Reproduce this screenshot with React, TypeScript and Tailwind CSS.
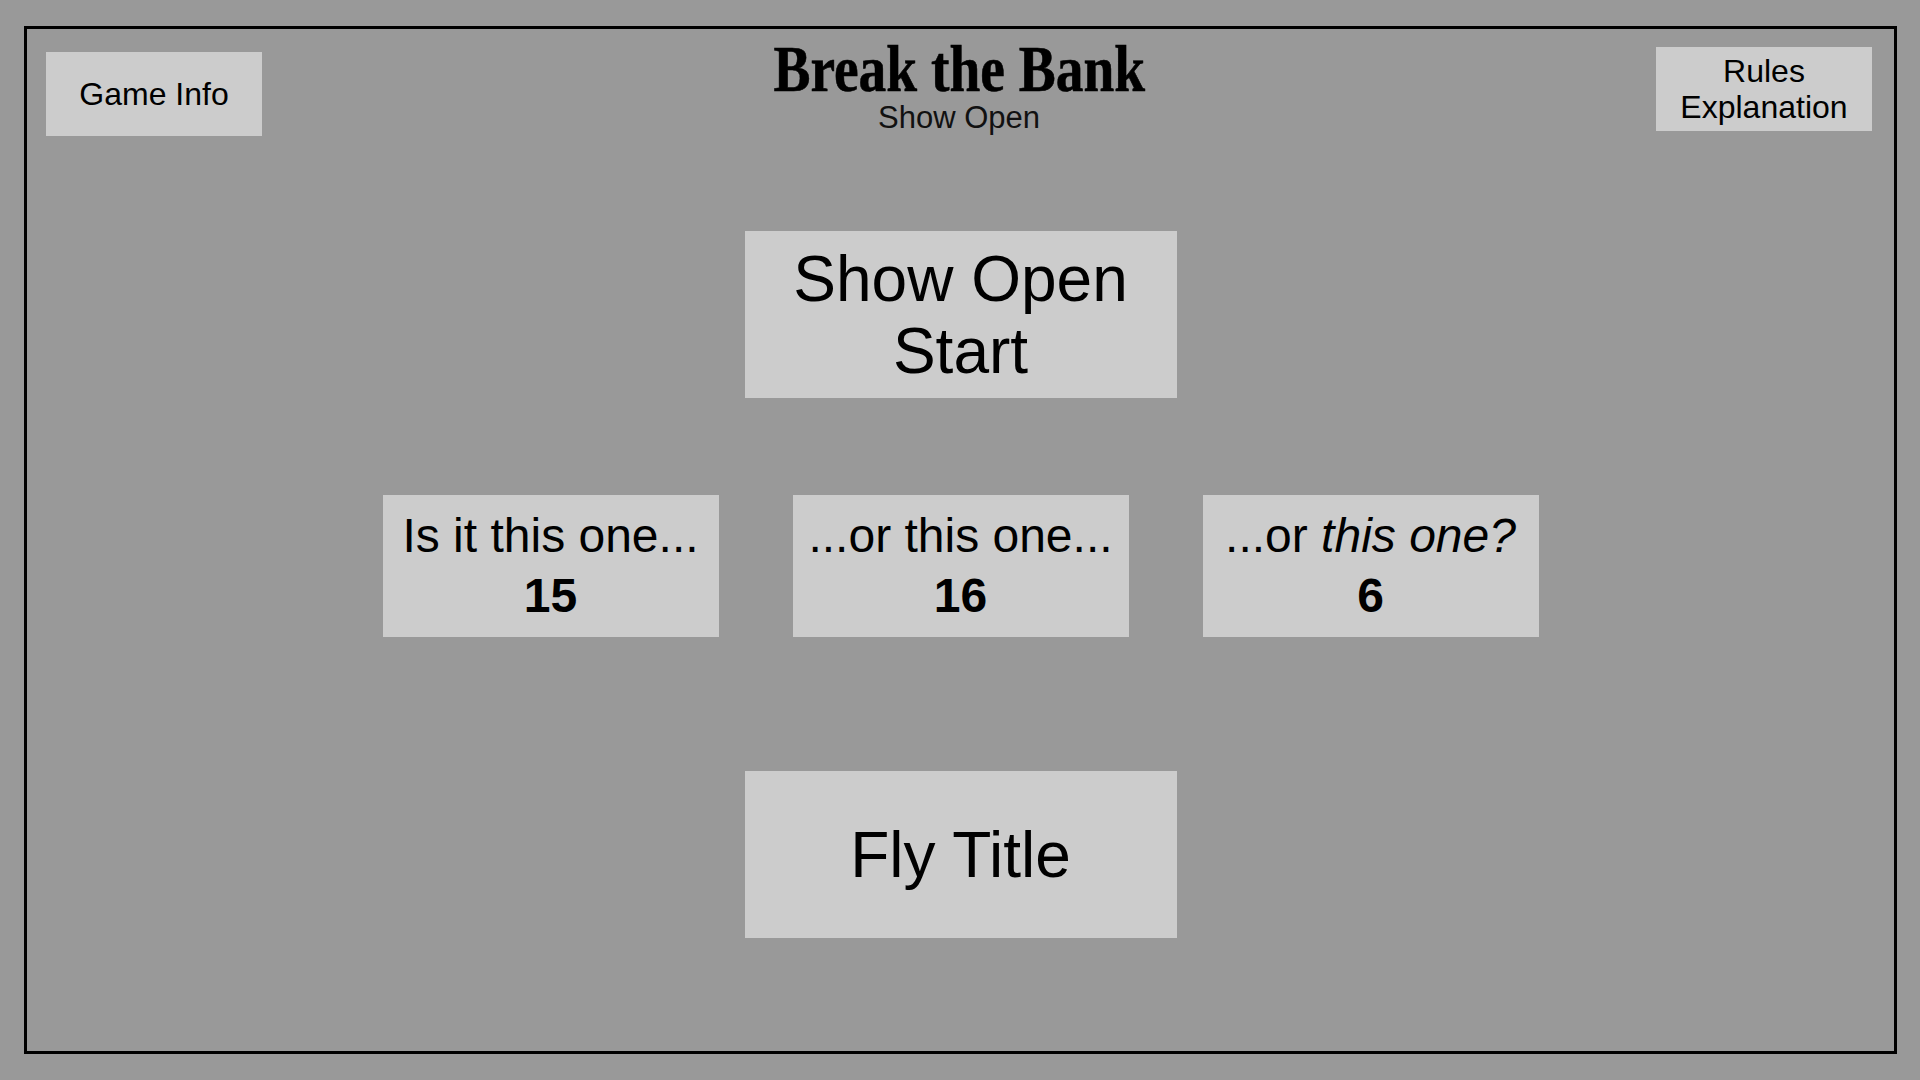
const sans = 'font-["Liberation_Sans",Arial,sans-serif]';

const picks = [
  { label: <>Is it this one...</>, count: 15 },
  { label: <>...or this one...</>, count: 16 },
  { label: <>...or <em>this one?</em></>, count: 6 },
];

function PanelButton({ children, className = '' }: { children: React.ReactNode; className?: string }) {
  return (
    <button className={`bg-[#cccccc] text-black flex items-center justify-center text-center ${className}`}>
      {children}
    </button>
  );
}

export default function App() {
  return (
    <div className={`h-screen w-full bg-[#999999] pt-[26px] pb-[26px] pl-[24px] pr-[23px] flex ${sans}`}>
      <div className="flex-1 border-[3px] border-black flex flex-col">
        {/* Header */}
        <div className="flex items-start justify-between h-[107px]">
          <PanelButton className="mt-[23px] ml-[19px] w-[216px] h-[84px] text-[32px] leading-none">
            Game Info
          </PanelButton>

          <div className="mt-[7px] flex flex-col items-center">
            <div className='font-["Liberation_Serif","Times_New_Roman",serif] font-bold text-[66px] leading-[66px] scale-x-[0.84] [-webkit-text-stroke:0.6px_black] text-black'>
              Break the Bank
            </div>
            <div className="text-[31px] leading-[31px] text-[#111]">Show Open</div>
          </div>

          <PanelButton className="mt-[18px] mr-[22px] w-[216px] h-[84px] text-[32px] leading-[36px]">
            Rules
            <br />
            Explanation
          </PanelButton>
        </div>

        {/* Main controls */}
        <div className="flex flex-col items-center">
          <PanelButton className="mt-[95px] w-[432px] h-[167px] text-[64px] leading-[72px]">
            Show Open
            <br />
            Start
          </PanelButton>

          <div className="mt-[97px] flex gap-[74px]">
            {picks.map((p, i) => (
              <div
                key={i}
                className="w-[336px] h-[142px] bg-[#cccccc] flex flex-col items-center justify-center text-[48px] leading-[60px] text-black"
              >
                <div>{p.label}</div>
                <div className="font-bold">{p.count}</div>
              </div>
            ))}
          </div>

          <PanelButton className="mt-[134px] w-[432px] h-[167px] text-[64px] leading-none">
            Fly Title
          </PanelButton>
        </div>
      </div>
    </div>
  );
}
